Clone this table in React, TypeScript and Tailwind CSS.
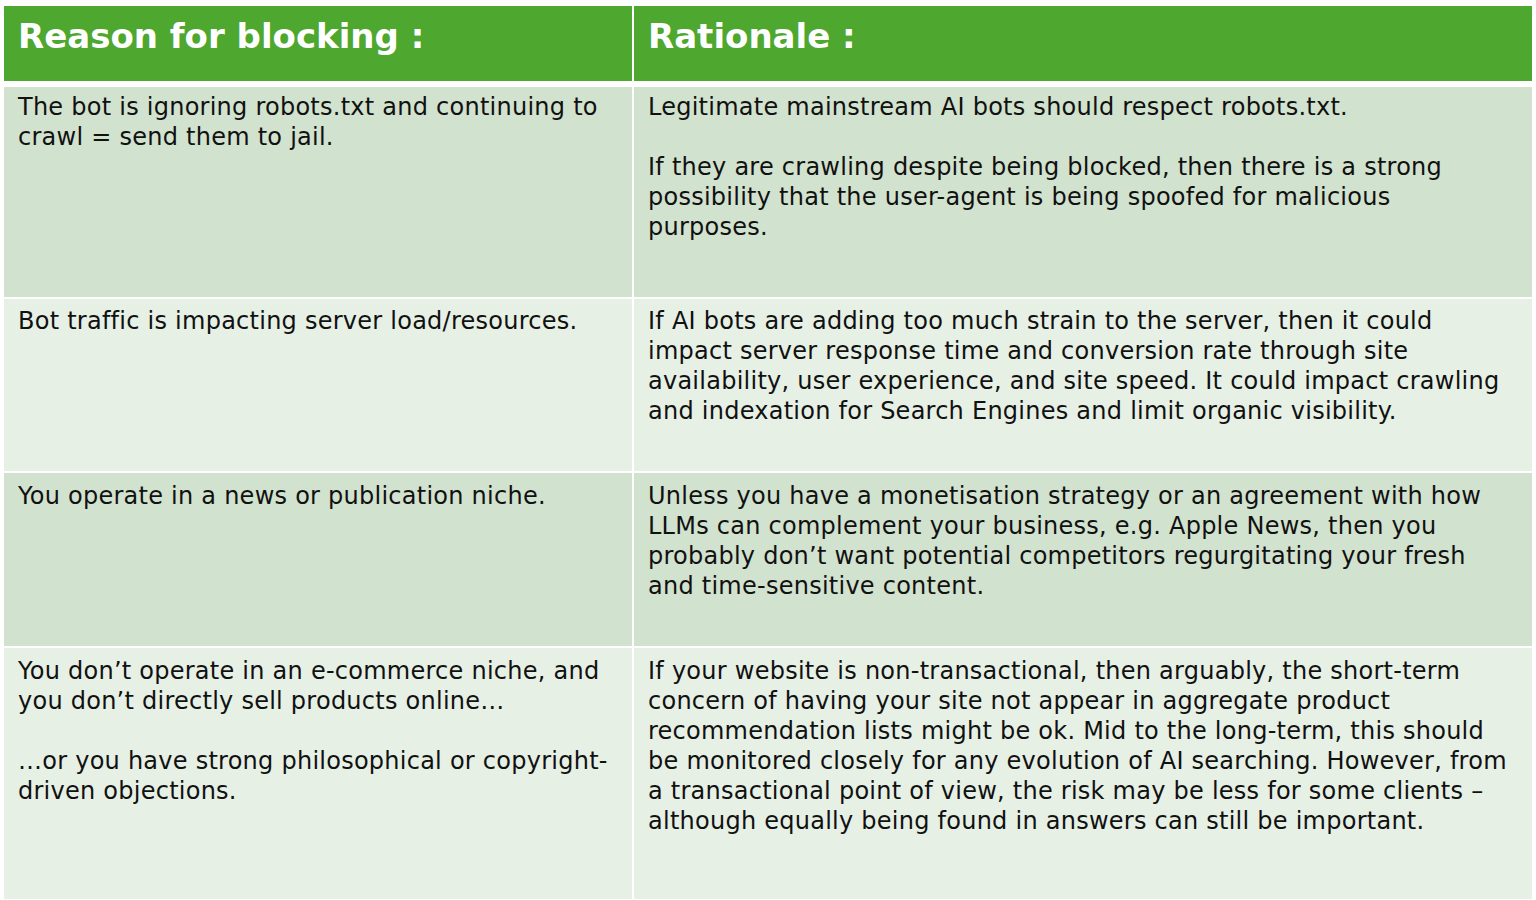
const rows = [
  {
    bg: "bg-[#d1e2ce]",
    h: "h-[210px] pt-[5px]",
    left: [["The bot is ignoring robots.txt and continuing to", "crawl = send them to jail."]],
    right: [
      ["Legitimate mainstream AI bots should respect robots.txt."],
      [
        "If they are crawling despite being blocked, then there is a strong",
        "possibility that the user-agent is being spoofed for malicious",
        "purposes.",
      ],
    ],
  },
  {
    bg: "bg-[#e6f0e5]",
    h: "h-[172px] pt-[7px]",
    left: [["Bot traffic is impacting server load/resources."]],
    right: [
      [
        "If AI bots are adding too much strain to the server, then it could",
        "impact server response time and conversion rate through site",
        "availability, user experience, and site speed. It could impact crawling",
        "and indexation for Search Engines and limit organic visibility.",
      ],
    ],
  },
  {
    bg: "bg-[#d1e2ce]",
    h: "h-[173px] pt-[8px]",
    left: [["You operate in a news or publication niche."]],
    right: [
      [
        "Unless you have a monetisation strategy or an agreement with how",
        "LLMs can complement your business, e.g. Apple News, then you",
        "probably don\u2019t want potential competitors regurgitating your fresh",
        "and time-sensitive content.",
      ],
    ],
  },
  {
    bg: "bg-[#e6f0e5]",
    h: "h-[251px] pt-[8px]",
    left: [
      [
        "You don\u2019t operate in an e-commerce niche, and",
        "you don\u2019t directly sell products online\u2026",
      ],
      ["\u2026or you have strong philosophical or copyright-", "driven objections."],
    ],
    right: [
      [
        "If your website is non-transactional, then arguably, the short-term",
        "concern of having your site not appear in aggregate product",
        "recommendation lists might be ok. Mid to the long-term, this should",
        "be monitored closely for any evolution of AI searching. However, from",
        "a transactional point of view, the risk may be less for some clients \u2013",
        "although equally being found in answers can still be important.",
      ],
    ],
  },
];

function Cell({ paras, bg, h }: { paras: string[][]; bg: string; h: string }) {
  return (
    <div className={`${bg} ${h} px-[14px] flex flex-col gap-[30px]`}>
      {paras.map((lines, i) => (
        <p key={i} className="text-[24px] leading-[30px] tracking-[0.25px] text-[#111] whitespace-nowrap">
          {lines.map((l, j) => (
            <span key={j} className="block">
              {l}
            </span>
          ))}
        </p>
      ))}
    </div>
  );
}

export default function App() {
  return (
    <div
      className="min-h-screen bg-white pt-[6px] pl-[4px] overflow-hidden"
      style={{ fontFamily: '"DejaVu Sans", sans-serif' }}
    >
      <div className="grid grid-cols-[628px_898px] gap-x-[2px] w-[1528px]">
        <div className="bg-[#4ea72e] h-[75px] px-[14px] pt-[8px] text-white font-bold text-[34px] leading-[44px]">
          Reason for blocking :
        </div>
        <div className="bg-[#4ea72e] h-[75px] px-[14px] pt-[8px] text-white font-bold text-[34px] leading-[44px]">
          Rationale :
        </div>
        {rows.map((r, i) => (
          <div key={i} className={`col-span-2 grid grid-cols-[628px_898px] gap-x-[2px] ${i === 0 ? "mt-[6px]" : "mt-[2px]"}`}>
            <Cell paras={r.left} bg={r.bg} h={r.h} />
            <Cell paras={r.right} bg={r.bg} h={r.h} />
          </div>
        ))}
      </div>
    </div>
  );
}
